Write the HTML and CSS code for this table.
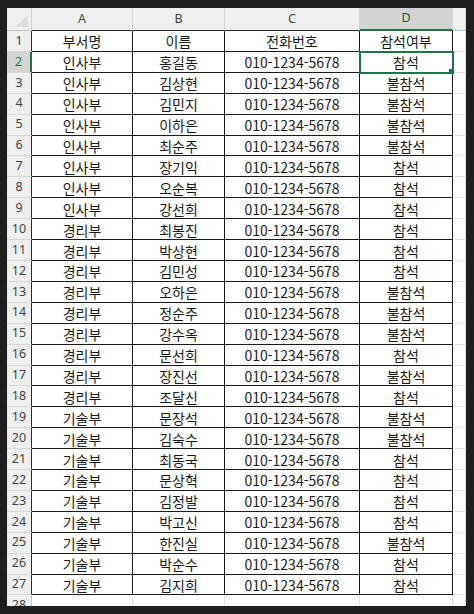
FILE: index.html
```html
<!DOCTYPE html>
<html lang="ko">
<head>
<meta charset="utf-8">
<link rel="stylesheet" href="styles.css">
</head>
<body>
<div class="frame">
<div class="sheet">
  <div class="corner"></div>
  <div class="colhd top">A</div><div class="colhd top">B</div><div class="colhd top">C</div><div class="colhd top sel">D</div><div class="colhd">&nbsp;</div>

  <div class="rowhd in">1</div><div class="d">부서명</div><div class="d">이름</div><div class="d">전화번호</div><div class="d">참석여부</div><div class="e"></div>
  <div class="rowhd in selrow">2</div><div class="d">인사부</div><div class="d">홍길동</div><div class="d">010-1234-5678</div><div class="d active">참석</div><div class="e"></div>
  <div class="rowhd in">3</div><div class="d">인사부</div><div class="d">김상현</div><div class="d">010-1234-5678</div><div class="d">불참석</div><div class="e"></div>
  <div class="rowhd in">4</div><div class="d">인사부</div><div class="d">김민지</div><div class="d">010-1234-5678</div><div class="d">불참석</div><div class="e"></div>
  <div class="rowhd in">5</div><div class="d">인사부</div><div class="d">이하은</div><div class="d">010-1234-5678</div><div class="d">불참석</div><div class="e"></div>
  <div class="rowhd in">6</div><div class="d">인사부</div><div class="d">최순주</div><div class="d">010-1234-5678</div><div class="d">불참석</div><div class="e"></div>
  <div class="rowhd in">7</div><div class="d">인사부</div><div class="d">장기익</div><div class="d">010-1234-5678</div><div class="d">참석</div><div class="e"></div>
  <div class="rowhd in">8</div><div class="d">인사부</div><div class="d">오순복</div><div class="d">010-1234-5678</div><div class="d">참석</div><div class="e"></div>
  <div class="rowhd in">9</div><div class="d">인사부</div><div class="d">강선희</div><div class="d">010-1234-5678</div><div class="d">참석</div><div class="e"></div>
  <div class="rowhd in">10</div><div class="d">경리부</div><div class="d">최봉진</div><div class="d">010-1234-5678</div><div class="d">참석</div><div class="e"></div>
  <div class="rowhd in">11</div><div class="d">경리부</div><div class="d">박상현</div><div class="d">010-1234-5678</div><div class="d">참석</div><div class="e"></div>
  <div class="rowhd in">12</div><div class="d">경리부</div><div class="d">김민성</div><div class="d">010-1234-5678</div><div class="d">참석</div><div class="e"></div>
  <div class="rowhd in">13</div><div class="d">경리부</div><div class="d">오하은</div><div class="d">010-1234-5678</div><div class="d">불참석</div><div class="e"></div>
  <div class="rowhd in">14</div><div class="d">경리부</div><div class="d">정순주</div><div class="d">010-1234-5678</div><div class="d">불참석</div><div class="e"></div>
  <div class="rowhd in">15</div><div class="d">경리부</div><div class="d">강수옥</div><div class="d">010-1234-5678</div><div class="d">불참석</div><div class="e"></div>
  <div class="rowhd in">16</div><div class="d">경리부</div><div class="d">문선희</div><div class="d">010-1234-5678</div><div class="d">참석</div><div class="e"></div>
  <div class="rowhd in">17</div><div class="d">경리부</div><div class="d">장진선</div><div class="d">010-1234-5678</div><div class="d">불참석</div><div class="e"></div>
  <div class="rowhd in">18</div><div class="d">경리부</div><div class="d">조달신</div><div class="d">010-1234-5678</div><div class="d">참석</div><div class="e"></div>
  <div class="rowhd in">19</div><div class="d">기술부</div><div class="d">문장석</div><div class="d">010-1234-5678</div><div class="d">불참석</div><div class="e"></div>
  <div class="rowhd in">20</div><div class="d">기술부</div><div class="d">김숙수</div><div class="d">010-1234-5678</div><div class="d">불참석</div><div class="e"></div>
  <div class="rowhd in">21</div><div class="d">기술부</div><div class="d">최동국</div><div class="d">010-1234-5678</div><div class="d">참석</div><div class="e"></div>
  <div class="rowhd in">22</div><div class="d">기술부</div><div class="d">문상혁</div><div class="d">010-1234-5678</div><div class="d">참석</div><div class="e"></div>
  <div class="rowhd in">23</div><div class="d">기술부</div><div class="d">김정발</div><div class="d">010-1234-5678</div><div class="d">참석</div><div class="e"></div>
  <div class="rowhd in">24</div><div class="d">기술부</div><div class="d">박고신</div><div class="d">010-1234-5678</div><div class="d">참석</div><div class="e"></div>
  <div class="rowhd in">25</div><div class="d">기술부</div><div class="d">한진실</div><div class="d">010-1234-5678</div><div class="d">불참석</div><div class="e"></div>
  <div class="rowhd in">26</div><div class="d">기술부</div><div class="d">박순수</div><div class="d">010-1234-5678</div><div class="d">참석</div><div class="e"></div>
  <div class="rowhd in">27</div><div class="d">기술부</div><div class="d">김지희</div><div class="d">010-1234-5678</div><div class="d">참석</div><div class="e"></div>
  <div class="rowhd">28</div><div class="e"></div><div class="e"></div><div class="e"></div><div class="e"></div><div class="e"></div>
</div>
</div>
</body>
</html>
```
FILE: styles.css
```css
html, body {
  margin: 0;
  padding: 0;
  background: #1f1f1f;
}
.frame {
  padding: 8px 8px 0 7px;
  width: 474px;
  height: 614px;
  box-sizing: border-box;
}
.sheet {
  width: 459px;
  height: 598px;
  overflow: hidden;
  background: #ffffff;
  display: grid;
  grid-template-columns: 25px 101px 92px 135px 93px 13px;
  grid-template-rows: 23px;
  grid-auto-rows: 20.92px;
  font-family: "Noto Sans CJK KR", "Noto Sans", sans-serif;
  font-size: 14px;
  color: #1a1a1a;
}
.sheet > div {
  box-sizing: border-box;
  display: flex;
  align-items: center;
  justify-content: center;
  white-space: nowrap;
  overflow: hidden;
  line-height: 1;
}
.corner {
  background: #efefef;
  border-right: 1px solid #d0d0d0;
  border-bottom: 1px solid #c4c4c4;
  position: relative;
}
.corner::after {
  content: "";
  position: absolute;
  right: 3px;
  bottom: 3px;
  width: 13px;
  height: 12px;
  background: #dcdcdc;
  clip-path: polygon(100% 0, 100% 100%, 0 100%);
}
.colhd {
  background: #efefef;
  color: #444444;
  font-family: "Noto Sans", "Liberation Sans", sans-serif;
  font-size: 12.5px;
  border-right: 1px solid #d4d4d4;
  border-bottom: 1px solid #c4c4c4;
}
.colhd.top {
  border-bottom-color: #2a2a2a;
}
.colhd.sel {
  background: #d3d3d3;
  color: #215a3a;
  border-bottom: 2px solid #217346;
}
.rowhd {
  background: #efefef;
  color: #444444;
  font-family: "Noto Sans", "Liberation Sans", sans-serif;
  font-size: 12.5px;
  border-right: 1px solid #c4c4c4;
  border-bottom: 1px solid #d8d8d8;
}
.rowhd.in {
  border-right-color: #2a2a2a;
}
.rowhd.selrow {
  background: #d3d3d3;
  color: #217346;
  border-right: 2px solid #217346;
}
.d {
  border-right: 1px solid #1a1a1a;
  border-bottom: 1px solid #1a1a1a;
  padding-top: 1px;
}
.e {
  border-right: 1px solid #e1e1e1;
  border-bottom: 1px solid #e1e1e1;
}
.active {
  position: relative;
  outline: 2px solid #217346;
  outline-offset: -1px;
}
.active::after {
  content: "";
  position: absolute;
  right: -3px;
  bottom: -3px;
  width: 5px;
  height: 5px;
  background: #217346;
  border: 1px solid #ffffff;
}
```
